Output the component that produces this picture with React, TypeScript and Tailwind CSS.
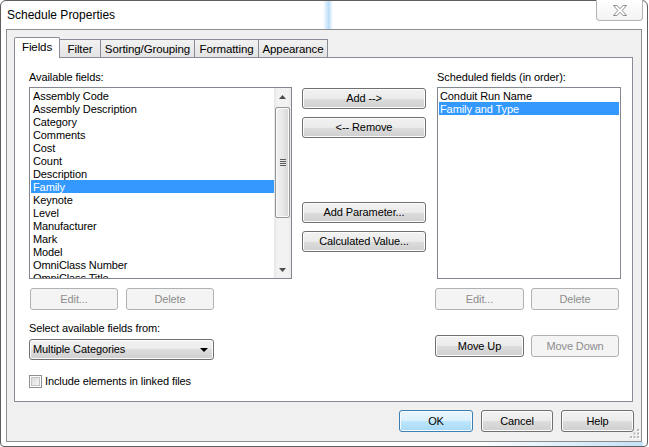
import React from "react";

const btn =
  "box-border flex items-center justify-center rounded-[3px] border border-[#707070] bg-[linear-gradient(to_bottom,#f2f2f2_0%,#ebebeb_50%,#dddddd_50%,#cfcfcf_100%)] shadow-[inset_0_0_0_1px_#fcfcfc] text-black";
const combo =
  "box-border flex items-center justify-between rounded-[3px] border border-[#707070] bg-[linear-gradient(to_bottom,#f2f2f2_0%,#ebebeb_50%,#dddddd_50%,#cfcfcf_100%)] shadow-[inset_0_0_0_1px_#fcfcfc] text-black";
const btnDisabled =
  "box-border flex items-center justify-center rounded-[3px] border border-[#adb2b5] bg-[#f4f4f4] text-[#8d8d8d]";
const btnDefault =
  "box-border flex items-center justify-center rounded-[3px] border border-[#3c7fb1] bg-[linear-gradient(to_bottom,#eaf6fd_0%,#d9f0fc_50%,#bee6fd_50%,#a7d9f5_100%)] shadow-[inset_0_0_0_1px_#f4fbff] text-black";
const tabInactive =
  "box-border flex h-[18px] items-center justify-center border border-b-0 border-l-0 border-[#898c95] bg-[linear-gradient(to_bottom,#f2f2f2,#e3e3e3)] pt-[1px] text-[11.5px]";

const available = [
  "Assembly Code",
  "Assembly Description",
  "Category",
  "Comments",
  "Cost",
  "Count",
  "Description",
  "Family",
  "Keynote",
  "Level",
  "Manufacturer",
  "Mark",
  "Model",
  "OmniClass Number",
  "OmniClass Title",
];

const scheduled = ["Conduit Run Name", "Family and Type"];

function Arrow({ up }: { up?: boolean }) {
  return (
    <svg width="7" height="4" viewBox="0 0 7 4">
      {up ? (
        <polygon points="0,4 7,4 3.5,0" fill="#4d4d4d" />
      ) : (
        <polygon points="0,0 7,0 3.5,4" fill="#4d4d4d" />
      )}
    </svg>
  );
}

function ScrollBar() {
  return (
    <div className="flex h-full w-[17px] flex-col bg-[linear-gradient(to_right,#e6e6e6_0%,#f2f2f2_20%,#f2f2f2_80%,#e9e9e9_100%)]">
      <div className="flex h-[17px] items-center justify-center">
        <Arrow up />
      </div>
      <div className="mx-[1px] mt-[2px] flex h-[111px] flex-col items-center justify-center gap-[1px] rounded-[2px] border border-[#979797] bg-[linear-gradient(to_right,#f2f2f2_0%,#e8e8e8_50%,#d4d4d4_100%)] shadow-[inset_0_0_0_1px_#f8f8f8]">
        <div className="h-[1px] w-[6px] bg-[#5a5a5a]" />
        <div className="h-[1px] w-[6px] bg-[#5a5a5a]" />
        <div className="h-[1px] w-[6px] bg-[#5a5a5a]" />
        <div className="h-[1px] w-[6px] bg-[#5a5a5a]" />
      </div>
      <div className="flex-1" />
      <div className="flex h-[17px] items-center justify-center">
        <Arrow />
      </div>
    </div>
  );
}

export default function App() {
  return (
    <div className="relative h-[447px] w-[649px] overflow-hidden bg-white font-['Segoe_UI','Liberation_Sans',Arial,sans-serif] text-[11px] leading-[13px] tracking-[-0.1px] text-black">
      {/* Window */}
      <div className="relative flex h-[447px] w-[648px] flex-col rounded-t-[6px] rounded-b-[4px] border border-[#5e5e5e] bg-white">
        {/* Title bar */}
        <div className="relative flex h-[28px] items-start">
          <div className="pl-[6px] pt-[7px] text-[12px] leading-[14px] tracking-normal text-black">
            Schedule Properties
          </div>
          <div className="absolute left-[322px] top-0 h-[28px] w-[10px] bg-[linear-gradient(to_right,rgba(255,255,255,0)_0%,#c9e4fa_45%,#b9dcf7_55%,rgba(255,255,255,0)_100%)]" />
          <div className="absolute right-[4px] top-[-1px] flex h-[21px] w-[47px] items-center justify-center rounded-b-[4px] border border-t-0 border-[#b4b4b4] bg-[linear-gradient(to_bottom,#ffffff,#f3f3f3)]">
            <svg width="14" height="11" viewBox="0 0 14 11">
              <polygon
                points="0.5,0.5 3.8,0.5 7,3.6 10.2,0.5 13.5,0.5 9.2,5.5 13.5,10.5 10.2,10.5 7,7.4 3.8,10.5 0.5,10.5 4.8,5.5"
                fill="#ffffff"
                stroke="#8c8c8c"
                strokeWidth="1"
              />
            </svg>
          </div>
        </div>

        {/* Content */}
        <div className="relative mx-[5px] box-border flex h-[413px] flex-col border border-[#8e8e8e] bg-[#f0f0f0]">
          {/* Tabs */}
          <div className="flex h-[27px] items-end pl-[7px] pt-[7px]">
            <div className="relative z-10 -mb-px box-border flex h-[21px] w-[46px] items-center justify-center rounded-t-[2px] border border-b-0 border-[#898c95] bg-white pb-[1px] text-[11.5px]">
              Fields
            </div>
            <div className={tabInactive + " w-[41px]"}>Filter</div>
            <div className={tabInactive + " w-[94px]"}>Sorting/Grouping</div>
            <div className={tabInactive + " w-[64px]"}>Formatting</div>
            <div className={tabInactive + " w-[69px]"}>Appearance</div>
          </div>

          {/* Panel */}
          <div className="ml-[7px] box-border flex h-[345px] w-[619px] border border-[#898c95] bg-white pl-[14px] pt-[12px]">
            {/* Left column */}
            <div className="flex w-[263px] flex-col">
              <div className="h-[14px] leading-[14px]">Available fields:</div>
              <div className="mt-[3px] box-border flex h-[192px] w-[263px] border border-[#828790] bg-white">
                <div className="flex flex-1 flex-col overflow-hidden pt-[1px]">
                  {available.map((f) => (
                    <div
                      key={f}
                      className={
                        f === "Family"
                          ? "ml-[1px] h-[13px] shrink-0 whitespace-nowrap bg-[#3399ff] pl-[2px] pt-[1px] leading-[13px] text-white"
                          : "ml-[1px] h-[13px] shrink-0 whitespace-nowrap pl-[2px] pt-[1px] leading-[13px]"
                      }
                    >
                      {f}
                    </div>
                  ))}
                </div>
                <ScrollBar />
              </div>
              <div className="ml-[1px] mt-[9px] flex gap-[8px]">
                <div className={btnDisabled + " h-[22px] w-[88px]"}>Edit...</div>
                <div className={btnDisabled + " h-[22px] w-[88px]"}>Delete</div>
              </div>
              <div className="mt-[11px] h-[14px] leading-[14px]">Select available fields from:</div>
              <div className={combo + " mt-[4px] h-[21px] w-[185px] pl-[3px] pr-[5px]"}>
                <span>Multiple Categories</span>
                <svg width="8" height="4" viewBox="0 0 8 4">
                  <polygon points="0,0 8,0 4,4" fill="#000" />
                </svg>
              </div>
              <div className="mt-[15px] flex h-[13px] items-center gap-[3px]">
                <div className="box-border flex h-[13px] w-[13px] items-center justify-center border border-[#8e8f8f] bg-white">
                  <div className="h-[9px] w-[9px] border border-[#c4c4c4] bg-[linear-gradient(135deg,#d9d9d9,#f6f6f6)]" />
                </div>
                <span className="leading-[13px]">Include elements in linked files</span>
              </div>
            </div>

            {/* Middle column */}
            <div className="ml-[10px] flex w-[124px] flex-col">
              <div className={btn + " mt-[18px] h-[21px] w-[124px]"}>Add --&gt;</div>
              <div className={btn + " mt-[8px] h-[21px] w-[124px]"}>&lt;-- Remove</div>
              <div className={btn + " mt-[64px] h-[21px] w-[124px]"}>Add Parameter...</div>
              <div className={btn + " mt-[8px] h-[21px] w-[124px]"}>Calculated Value...</div>
            </div>

            {/* Right column */}
            <div className="ml-[11px] flex w-[184px] flex-col">
              <div className="h-[14px] leading-[14px]">Scheduled fields (in order):</div>
              <div className="mt-[3px] box-border flex h-[192px] w-[184px] flex-col border border-[#828790] bg-white pt-[1px]">
                {scheduled.map((f) => (
                  <div
                    key={f}
                    className={
                      f === "Family and Type"
                        ? "mx-[1px] h-[13px] whitespace-nowrap bg-[#3399ff] pl-[1px] pt-[1px] leading-[13px] text-white"
                        : "mx-[1px] h-[13px] whitespace-nowrap pl-[1px] pt-[1px] leading-[13px]"
                    }
                  >
                    {f}
                  </div>
                ))}
              </div>
              <div className="-ml-[2px] mt-[9px] flex gap-[7px]">
                <div className={btnDisabled + " h-[22px] w-[89px]"}>Edit...</div>
                <div className={btnDisabled + " h-[22px] w-[88px]"}>Delete</div>
              </div>
              <div className="-ml-[2px] mt-[25px] flex gap-[7px]">
                <div className={btn + " h-[22px] w-[89px]"}>Move Up</div>
                <div className={btnDisabled + " h-[22px] w-[88px]"}>Move Down</div>
              </div>
            </div>
          </div>

          {/* Bottom buttons */}
          <div className="mt-[8px] flex justify-end gap-[8px] pr-[7px]">
            <div className={btnDefault + " h-[22px] w-[74px]"}>OK</div>
            <div className={btn + " h-[22px] w-[72px]"}>Cancel</div>
            <div className={btn + " h-[22px] w-[73px]"}>Help</div>
          </div>

          {/* Size grip */}
          <svg className="absolute bottom-[2px] right-[1px]" width="10" height="10" viewBox="0 0 10 10">
            {[
              [7, 0],
              [7, 3.5],
              [3.5, 3.5],
              [7, 7],
              [3.5, 7],
              [0, 7],
            ].map(([x, y], i) => (
              <g key={i}>
                <rect x={x + 1} y={y + 1} width="2" height="2" fill="#ffffff" />
                <rect x={x} y={y} width="2" height="2" fill="#b8b8b8" />
              </g>
            ))}
          </svg>
        </div>
        <div className="pointer-events-none absolute bottom-0 right-[4px] h-[4px] w-[170px] bg-[linear-gradient(to_right,rgba(255,255,255,0),#c4e2f8)]" />
      </div>
    </div>
  );
}
